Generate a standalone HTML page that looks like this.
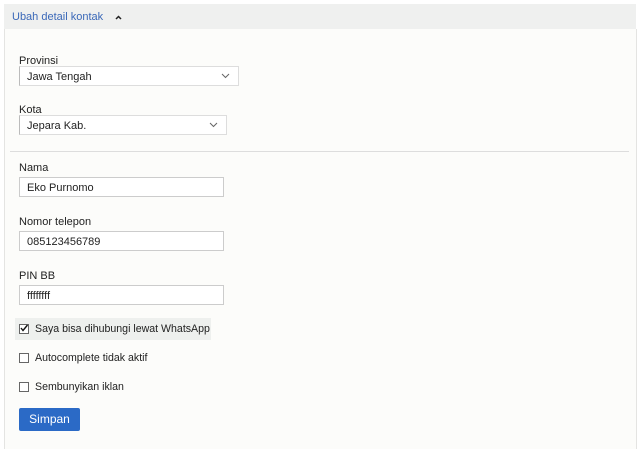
<!DOCTYPE html><html><head><style>
body{margin:0;width:640px;height:439px;background:#fff;font-family:"Liberation Sans",sans-serif;font-size:11px;color:#222;position:relative;overflow:hidden}
.a{position:absolute}
.hdr{left:4px;top:4px;width:632px;height:25px;background:#eff0ef}
.body{left:4px;top:29px;width:631px;height:420px;background:#fcfcfa;border-left:1px solid #e4e4e2;border-right:1px solid #e4e4e2}
.lbl{left:19px}
.box{left:19px;height:20px;border:1px solid #ccc;background:#fff;box-sizing:border-box;padding-left:7px;line-height:20px}
.sel{border-color:#ddd;border-left-color:#bbb;border-bottom-color:#ddd}
.chev{position:absolute;right:8px;top:6px}
.cb{width:8px;height:8px;border:1px solid #666;background:#fff;left:19px}
.ck{font-size:10.6px}
</style></head><body>
<div class="a hdr"></div>
<div class="a" style="left:12px;top:11px;color:#3a68b8">Ubah detail kontak</div>
<svg class="a" style="left:115px;top:15px" width="7" height="5"><path d="M1 4L3.5 1.5L6 4" stroke="#222" stroke-width="1.5" fill="none"/></svg>
<div class="a body"></div>
<div class="a lbl" style="top:55px">Provinsi</div>
<div class="a box sel" style="top:66px;width:220px">Jawa Tengah<svg class="chev" width="9" height="6"><path d="M1 1L4.5 4.5L8 1" stroke="#666" fill="none"/></svg></div>
<div class="a lbl" style="top:104px">Kota</div>
<div class="a box sel" style="top:115px;width:208px">Jepara Kab.<svg class="chev" width="9" height="6"><path d="M1 1L4.5 4.5L8 1" stroke="#666" fill="none"/></svg></div>
<div class="a" style="left:10px;top:151px;width:619px;height:1px;background:#ddd"></div>
<div class="a lbl" style="top:162px">Nama</div>
<div class="a box" style="top:177px;width:205px">Eko Purnomo</div>
<div class="a lbl" style="top:216px">Nomor telepon</div>
<div class="a box" style="top:231px;width:205px">085123456789</div>
<div class="a lbl" style="top:270px">PIN BB</div>
<div class="a box" style="top:285px;width:205px">ffffffff</div>
<div class="a" style="left:15px;top:318px;width:196px;height:22px;background:#eef0ee"></div>
<div class="a cb" style="top:324px"></div>
<svg class="a" style="left:19px;top:323px" width="10" height="10"><path d="M2 5L4 7.5L8.5 2" stroke="#111" stroke-width="1.4" fill="none"/></svg>
<div class="a ck" style="left:35px;top:323px">Saya bisa dihubungi lewat WhatsApp</div>
<div class="a cb" style="top:353px"></div>
<div class="a ck" style="left:35px;top:352px">Autocomplete tidak aktif</div>
<div class="a cb" style="top:382px"></div>
<div class="a ck" style="left:35px;top:381px">Sembunyikan iklan</div>
<div class="a" style="left:19px;top:408px;width:61px;height:23px;background:#2b6ac6;border-radius:2px;color:#fff;text-align:center;line-height:23px;font-size:12px">Simpan</div>
</body></html>
